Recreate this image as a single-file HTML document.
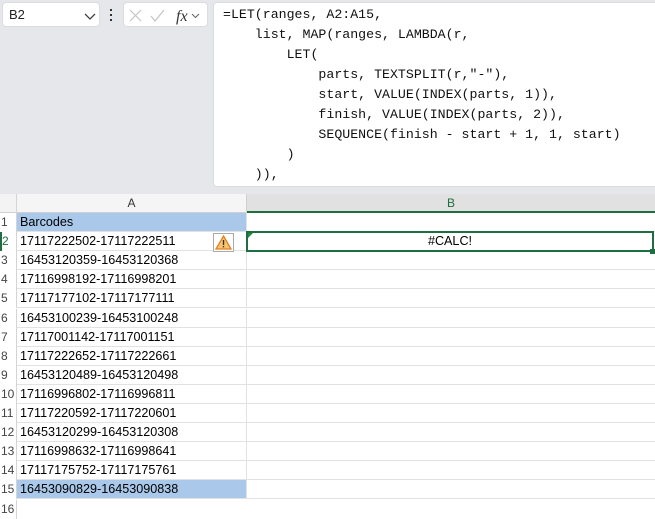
<!DOCTYPE html><html><head><style>
*{margin:0;padding:0;box-sizing:border-box}
body{width:655px;height:505px;overflow:hidden;background:#fff;font-family:"Liberation Sans",sans-serif;position:relative}
.top{position:absolute;left:0;top:0;width:655px;height:194px;background:#e6e7eb}
.box{position:absolute;background:#fff;border-radius:4px;border:1px solid #dcdcdf}
pre{position:absolute;left:223px;top:5px;font-family:"Liberation Mono",monospace;font-size:13.25px;line-height:20px;color:#111}
.hdr{position:absolute;top:194px;height:19px;border-bottom:1px solid #d0d0d0;font-size:12px;color:#333;text-align:center;line-height:19px}
.rn{position:absolute;left:0;width:17px;font-size:12px;color:#444;padding-left:1px;border-right:1px solid #d4d4d4}
.c{position:absolute;left:17px;width:230px;font-size:12.6px;color:#000;padding-left:3px;border-bottom:1px solid #e2e2e2;border-right:1px solid #e2e2e2}
.b{position:absolute;left:247px;width:408px;border-bottom:1px solid #e2e2e2}
</style></head><body>
<div class="top"></div>
<div class="box" style="left:2px;top:2px;width:98px;height:25px"><span style="position:absolute;left:6px;top:4px;font-size:13px;color:#222">B2</span><svg width="14" height="10" style="position:absolute;left:80px;top:9px"><path d="M2 2l5 5 5-5" stroke="#444" stroke-width="1.3" fill="none"/></svg></div>
<div style="position:absolute;left:110px;top:9px;width:2px;height:2px;background:#333;box-shadow:0 5px 0 #333,0 10px 0 #333"></div>
<div class="box" style="left:123px;top:2px;width:85px;height:25px">
<svg width="85" height="25" style="position:absolute;left:0;top:0"><path d="M6 7l11 11M17 7L6 18" stroke="#c4c4c4" stroke-width="1.2" fill="none"/><path d="M27 13l4 5 9-11" stroke="#c4c4c4" stroke-width="1.2" fill="none"/><text x="52" y="18" font-family="Liberation Serif" font-style="italic" font-size="16" fill="#333">fx</text><path d="M68 11l3.5 3.5 3.5-3.5" stroke="#666" fill="none"/></svg></div>
<div class="box" style="left:213px;top:2px;width:450px;height:185px"></div>
<pre>=LET(ranges, A2:A15,
    list, MAP(ranges, LAMBDA(r,
        LET(
            parts, TEXTSPLIT(r,"-"),
            start, VALUE(INDEX(parts, 1)),
            finish, VALUE(INDEX(parts, 2)),
            SEQUENCE(finish - start + 1, 1, start)
        )
    )),</pre>
<div class="hdr" style="left:0;width:17px;background:#f3f3f3;border-right:1px solid #d4d4d4"></div>
<div class="hdr" style="left:17px;width:230px;background:#f5f5f5;border-right:1px solid #d0d0d0">A</div>
<div class="hdr" style="left:247px;width:408px;background:#e1e1e1;border-bottom:2px solid #1e6e42;color:#1e6e42;height:19px">B</div>
<div id="g"></div>
<script>
var d=["Barcodes","17117222502-17117222511","16453120359-16453120368","17116998192-17116998201","17117177102-17117177111","16453100239-16453100248","17117001142-17117001151","17117222652-17117222661","16453120489-16453120498","17116996802-17116996811","17117220592-17117220601","16453120299-16453120308","17116998632-17116998641","17117175752-17117175761","16453090829-16453090838"];
var h="";for(var i=0;i<16;i++){var t=213+i*19.1;
h+='<div class="rn" style="top:'+t+'px;height:19.1px;line-height:19px;'+(i==1?'color:#1e6e42;border-left:2px solid #1e6e42;padding-left:0':'')+'">'+(i+1)+'</div>';
if(i<15){var bg=(i==0||i==14)?'background:#a9c8ea;':'';
h+='<div class="c" style="top:'+t+'px;height:19.1px;line-height:19px;'+bg+'">'+d[i]+'</div>';
h+='<div class="b" style="top:'+t+'px;height:19.1px"></div>';}}
document.getElementById('g').innerHTML=h;
</script>
<div style="position:absolute;left:213px;top:233px;width:21px;height:19px;border:1px solid #aaa;background:#fff"><svg width="19" height="17"><path d="M9.5 2L17 15H2z" fill="#f7c56e" stroke="#e67e22" stroke-width="1.3"/><rect x="8.8" y="6" width="1.4" height="5" fill="#333"/><rect x="8.8" y="12" width="1.4" height="1.4" fill="#333"/></svg></div>
<div style="position:absolute;left:246px;top:231px;width:408px;height:21px;border:2px solid #1e6e42;text-align:center;font-size:12.6px;line-height:17px">#CALC!</div>
<div style="position:absolute;left:248px;top:233px;width:0;height:0;border-top:5px solid #1e8a3c;border-right:5px solid transparent"></div>
<div style="position:absolute;left:650px;top:249px;width:5px;height:5px;background:#1e6e42"></div>
</body></html>
